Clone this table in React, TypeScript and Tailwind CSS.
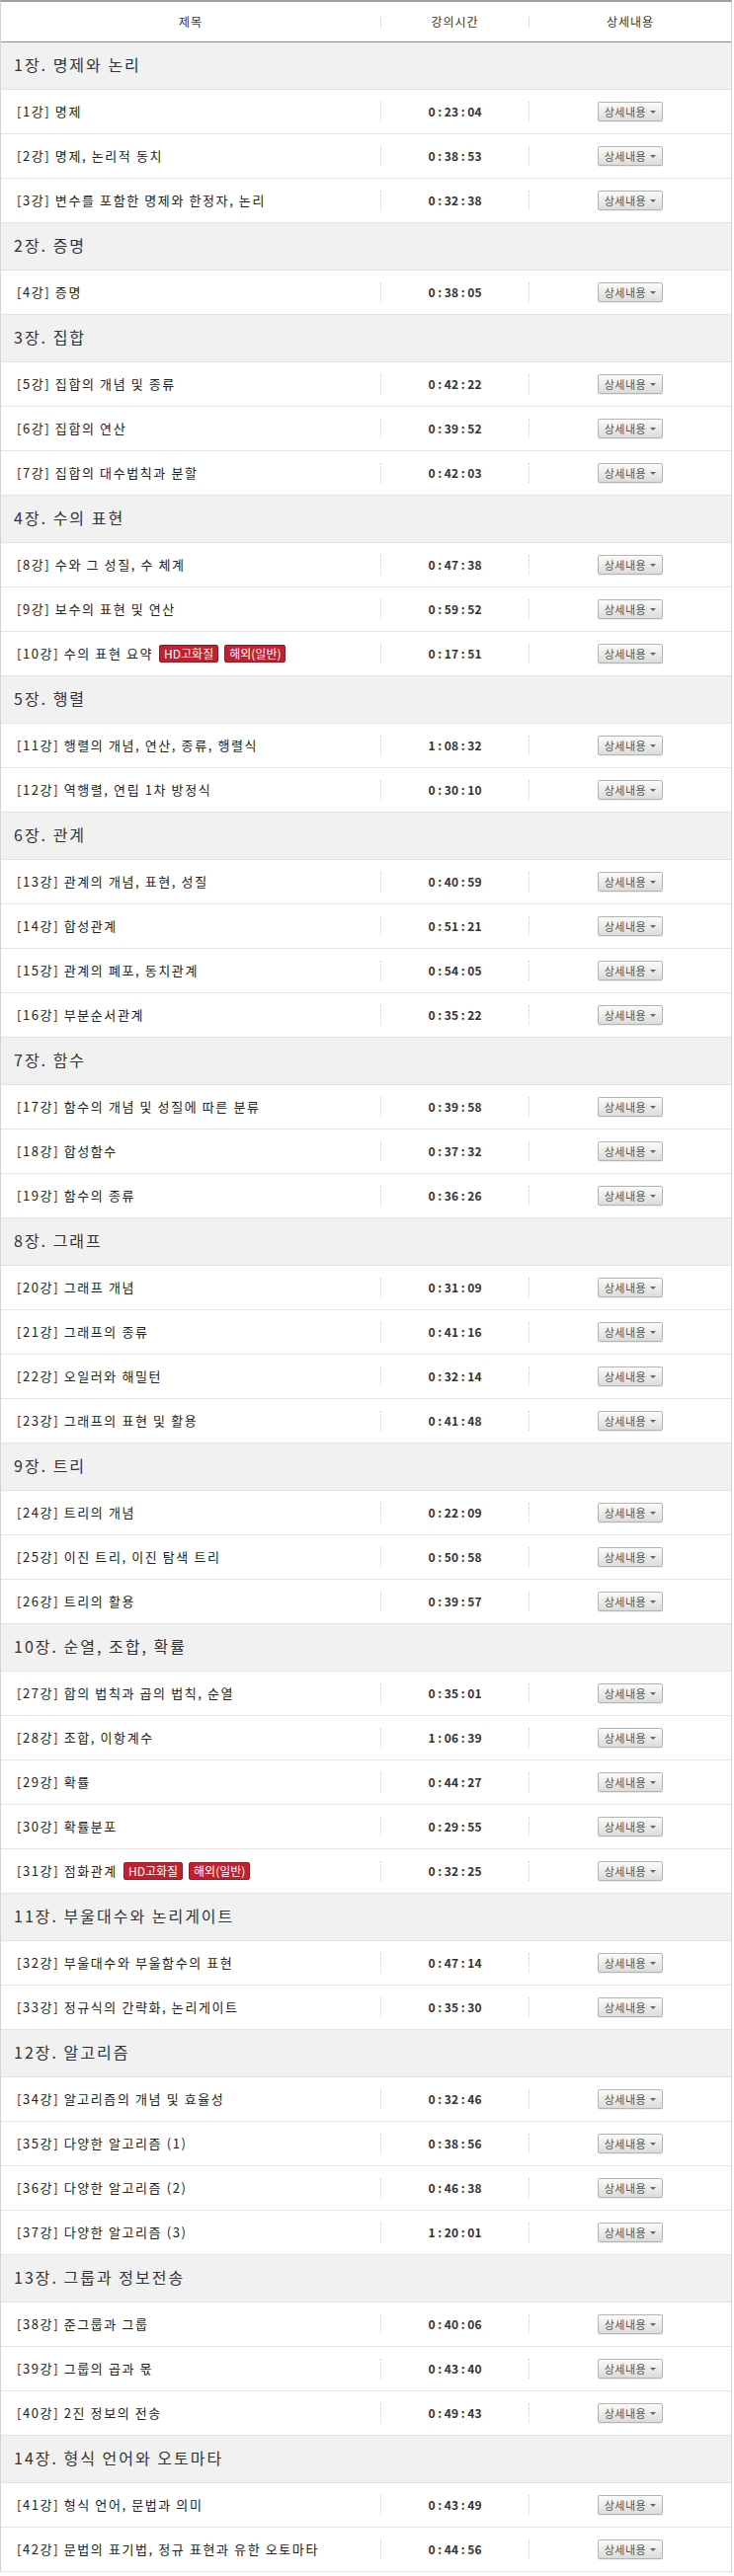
import React from "react";

type Lecture = { t: string; time: string; badges?: boolean };
type Chapter = { title: string; lectures: Lecture[] };

const data: Chapter[] = [
  {
    title: "1장. 명제와 논리",
    lectures: [
      { t: "[1강] 명제", time: "0:23:04" },
      { t: "[2강] 명제, 논리적 동치", time: "0:38:53" },
      { t: "[3강] 변수를 포함한 명제와 한정자, 논리", time: "0:32:38" },
    ],
  },
  { title: "2장. 증명", lectures: [{ t: "[4강] 증명", time: "0:38:05" }] },
  {
    title: "3장. 집합",
    lectures: [
      { t: "[5강] 집합의 개념 및 종류", time: "0:42:22" },
      { t: "[6강] 집합의 연산", time: "0:39:52" },
      { t: "[7강] 집합의 대수법칙과 분할", time: "0:42:03" },
    ],
  },
  {
    title: "4장. 수의 표현",
    lectures: [
      { t: "[8강] 수와 그 성질, 수 체계", time: "0:47:38" },
      { t: "[9강] 보수의 표현 및 연산", time: "0:59:52" },
      { t: "[10강] 수의 표현 요약", time: "0:17:51", badges: true },
    ],
  },
  {
    title: "5장. 행렬",
    lectures: [
      { t: "[11강] 행렬의 개념, 연산, 종류, 행렬식", time: "1:08:32" },
      { t: "[12강] 역행렬, 연립 1차 방정식", time: "0:30:10" },
    ],
  },
  {
    title: "6장. 관계",
    lectures: [
      { t: "[13강] 관계의 개념, 표현, 성질", time: "0:40:59" },
      { t: "[14강] 합성관계", time: "0:51:21" },
      { t: "[15강] 관계의 폐포, 동치관계", time: "0:54:05" },
      { t: "[16강] 부분순서관계", time: "0:35:22" },
    ],
  },
  {
    title: "7장. 함수",
    lectures: [
      { t: "[17강] 함수의 개념 및 성질에 따른 분류", time: "0:39:58" },
      { t: "[18강] 합성함수", time: "0:37:32" },
      { t: "[19강] 함수의 종류", time: "0:36:26" },
    ],
  },
  {
    title: "8장. 그래프",
    lectures: [
      { t: "[20강] 그래프 개념", time: "0:31:09" },
      { t: "[21강] 그래프의 종류", time: "0:41:16" },
      { t: "[22강] 오일러와 해밀턴", time: "0:32:14" },
      { t: "[23강] 그래프의 표현 및 활용", time: "0:41:48" },
    ],
  },
  {
    title: "9장. 트리",
    lectures: [
      { t: "[24강] 트리의 개념", time: "0:22:09" },
      { t: "[25강] 이진 트리, 이진 탐색 트리", time: "0:50:58" },
      { t: "[26강] 트리의 활용", time: "0:39:57" },
    ],
  },
  {
    title: "10장. 순열, 조합, 확률",
    lectures: [
      { t: "[27강] 합의 법칙과 곱의 법칙, 순열", time: "0:35:01" },
      { t: "[28강] 조합, 이항계수", time: "1:06:39" },
      { t: "[29강] 확률", time: "0:44:27" },
      { t: "[30강] 확률분포", time: "0:29:55" },
      { t: "[31강] 점화관계", time: "0:32:25", badges: true },
    ],
  },
  {
    title: "11장. 부울대수와 논리게이트",
    lectures: [
      { t: "[32강] 부울대수와 부울함수의 표현", time: "0:47:14" },
      { t: "[33강] 정규식의 간략화, 논리게이트", time: "0:35:30" },
    ],
  },
  {
    title: "12장. 알고리즘",
    lectures: [
      { t: "[34강] 알고리즘의 개념 및 효율성", time: "0:32:46" },
      { t: "[35강] 다양한 알고리즘 (1)", time: "0:38:56" },
      { t: "[36강] 다양한 알고리즘 (2)", time: "0:46:38" },
      { t: "[37강] 다양한 알고리즘 (3)", time: "1:20:01" },
    ],
  },
  {
    title: "13장. 그룹과 정보전송",
    lectures: [
      { t: "[38강] 준그룹과 그룹", time: "0:40:06" },
      { t: "[39강] 그룹의 곱과 몫", time: "0:43:40" },
      { t: "[40강] 2진 정보의 전송", time: "0:49:43" },
    ],
  },
  {
    title: "14장. 형식 언어와 오토마타",
    lectures: [
      { t: "[41강] 형식 언어, 문법과 의미", time: "0:43:49" },
      { t: "[42강] 문법의 표기법, 정규 표현과 유한 오토마타", time: "0:44:56" },
    ],
  },
];

function Badge({ children }: { children: React.ReactNode }) {
  return (
    <span className="ml-[6px] inline-flex h-[18px] items-center rounded-[2px] border border-[#9a1722] bg-[#c02030] px-[4px] text-[12px] leading-none tracking-normal text-white">
      {children}
    </span>
  );
}

function DetailButton() {
  return (
    <button className="flex h-[20px] w-[66px] items-center justify-center gap-[4px] rounded-[2px] border border-[#b4b4b4] bg-linear-to-b from-[#fbfbfb] to-[#dcdcdc] text-[11px] leading-none tracking-[0.5px] text-[#555] shadow-[0_1px_0_#eee]">
      <span>상세내용</span>
      <span className="inline-block h-0 w-0 border-x-[3px] border-t-[3px] border-x-transparent border-t-[#666]" />
    </button>
  );
}

function Row({ l }: { l: Lecture }) {
  const time = l.time.split(":").join(" : ");
  return (
    <div className="flex h-[45px] items-center border-b border-[#e4e4e4]">
      <div className="flex w-[384px] items-center pl-[16px] text-[13px] tracking-[1.6px] text-[#222]">
        <span>{l.t}</span>
        {l.badges && (
          <>
            <Badge>HD고화질</Badge>
            <Badge>해외(일반)</Badge>
          </>
        )}
      </div>
      <div className="h-[20px] w-0 border-l border-dotted border-[#cfcfcf]" />
      <div className="w-[149px] text-center text-[12px] font-bold text-[#333]">{time}</div>
      <div className="h-[20px] w-0 border-l border-dotted border-[#cfcfcf]" />
      <div className="flex flex-1 justify-center">
        <DetailButton />
      </div>
    </div>
  );
}

export default function App() {
  return (
    <div className="bg-white font-['Noto_Sans_CJK_KR','Noto_Sans',sans-serif]">
      <div className="w-[741px] border-x border-t-2 border-x-[#d4d4d4] border-t-[#9ca0a6]">
        <div className="flex h-[41px] items-center border-b border-[#8a8a8a] text-[12px] tracking-[1px] text-[#333]">
          <div className="w-[384px] text-center">제목</div>
          <div className="h-[11px] w-0 border-l border-[#dcdcdc]" />
          <div className="w-[149px] text-center">강의시간</div>
          <div className="h-[11px] w-0 border-l border-[#dcdcdc]" />
          <div className="flex-1 text-center">상세내용</div>
        </div>
        {data.map((c) => (
          <div key={c.title}>
            <div className="flex h-[48px] items-center border-b border-[#e2e2e2] bg-[#f1f1f1] pl-[13px] pb-[3px] text-[16px] tracking-[2px] text-[#333]">
              {c.title}
            </div>
            {c.lectures.map((l) => (
              <Row key={l.t} l={l} />
            ))}
          </div>
        ))}
      </div>
    </div>
  );
}
